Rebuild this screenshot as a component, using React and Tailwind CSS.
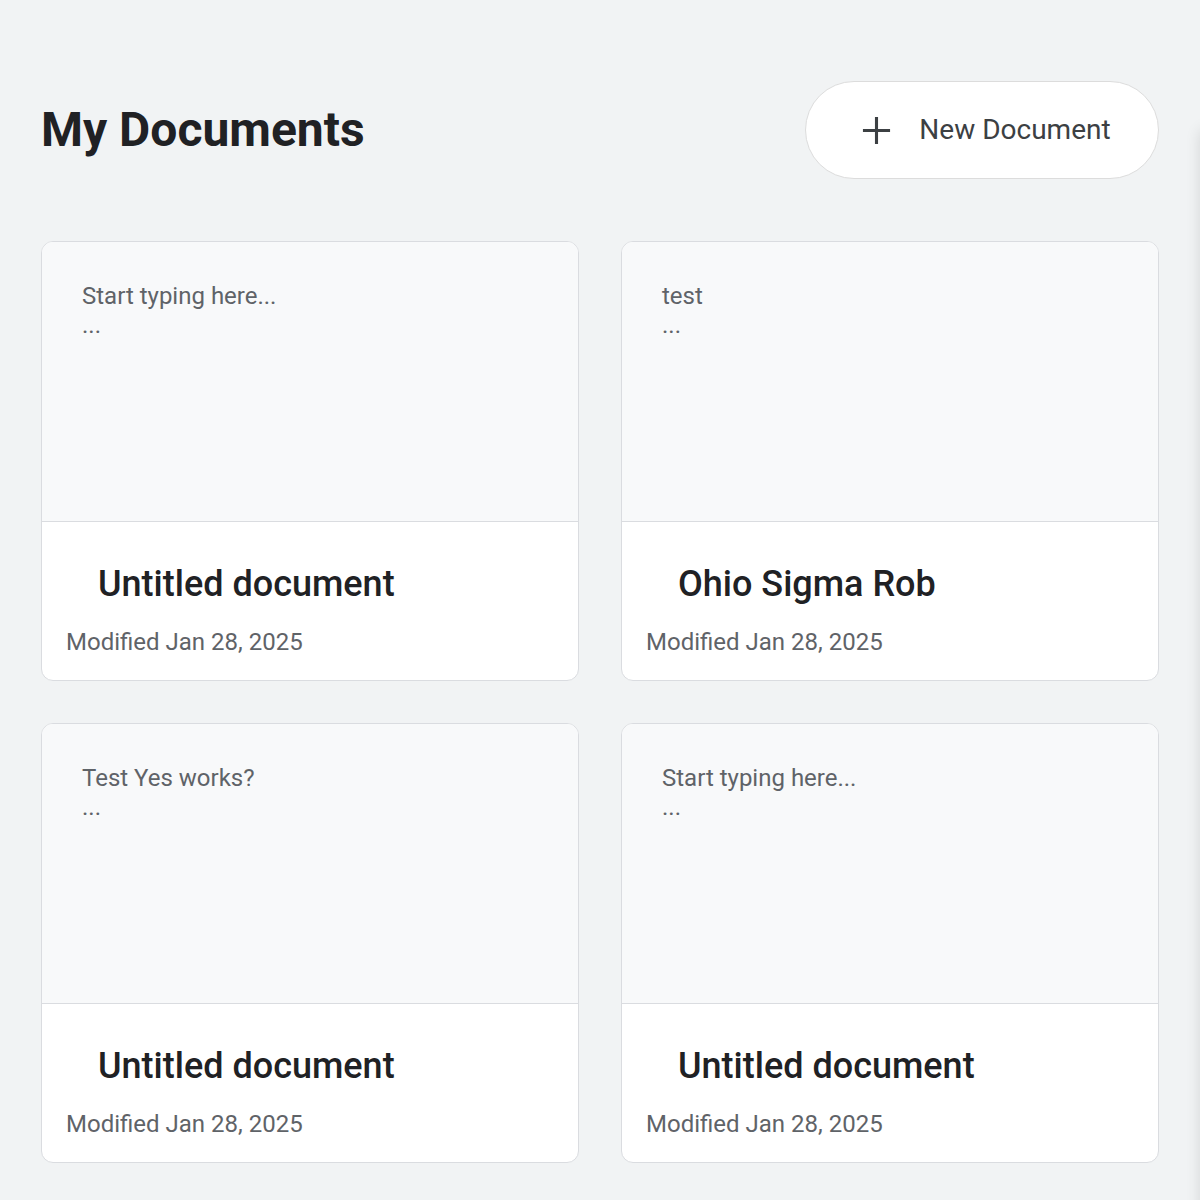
import React from 'react';

const docs = [
  { id: 1, preview: 'Start typing here...', title: 'Untitled document', modified: 'Jan 28, 2025' },
  { id: 2, preview: 'test', title: 'Ohio Sigma Rob', modified: 'Jan 28, 2025' },
  { id: 3, preview: 'Test Yes works?', title: 'Untitled document', modified: 'Jan 28, 2025' },
  { id: 4, preview: 'Start typing here...', title: 'Untitled document', modified: 'Jan 28, 2025' },
];

const DocCard = ({ preview, title, modified }) => (
  <div className="bg-white border border-[#dadce0] rounded-[12px] overflow-hidden">
    <div className="h-[280px] bg-[#f8f9fa] border-b border-[#dadce0] px-[40px] pt-[39px] text-[24px] leading-[31px] text-[#5f6368]">
      <p>{preview}</p>
      <p className="-mt-[2px]">...</p>
    </div>
    <div className="px-[24px] pt-[41px] pb-[23px]">
      <h3 className="ml-[32px] text-[36px] leading-[42px] font-medium text-[#202124]">{title}</h3>
      <p className="mt-[22px] text-[24px] leading-[30px] text-[#5f6368]">Modified {modified}</p>
    </div>
  </div>
);

const App = () => {
  return (
    <div
      className="min-h-screen bg-[#f1f3f4] px-[41px] pt-[81px] pb-10"
      style={{ fontFamily: 'Roboto, "Liberation Sans", sans-serif' }}
    >
      <header className="flex items-center justify-between mb-[62px]">
        <h1 className="text-[48px] font-bold text-[#202124]">My Documents</h1>
        <button className="h-[98px] w-[354px] pl-[8px] flex items-center justify-center gap-[27px] bg-white border-[1.5px] border-[#dcdcdc] rounded-full text-[28px] text-[#3c4043]">
          <svg width="31" height="31" viewBox="0 0 32 32" fill="none" stroke="#3c4043" strokeWidth="3.2">
            <path d="M16 2v28M2 16h28" />
          </svg>
          <span>New Document</span>
        </button>
      </header>

      <div className="grid grid-cols-2 gap-[42px]">
        {docs.map((d) => (
          <DocCard key={d.id} {...d} />
        ))}
      </div>

      <div className="fixed top-[130px] left-full h-full w-[200px] shadow-[0_0_14px_rgba(0,0,0,0.12)]" />
    </div>
  );
};

export default App;
